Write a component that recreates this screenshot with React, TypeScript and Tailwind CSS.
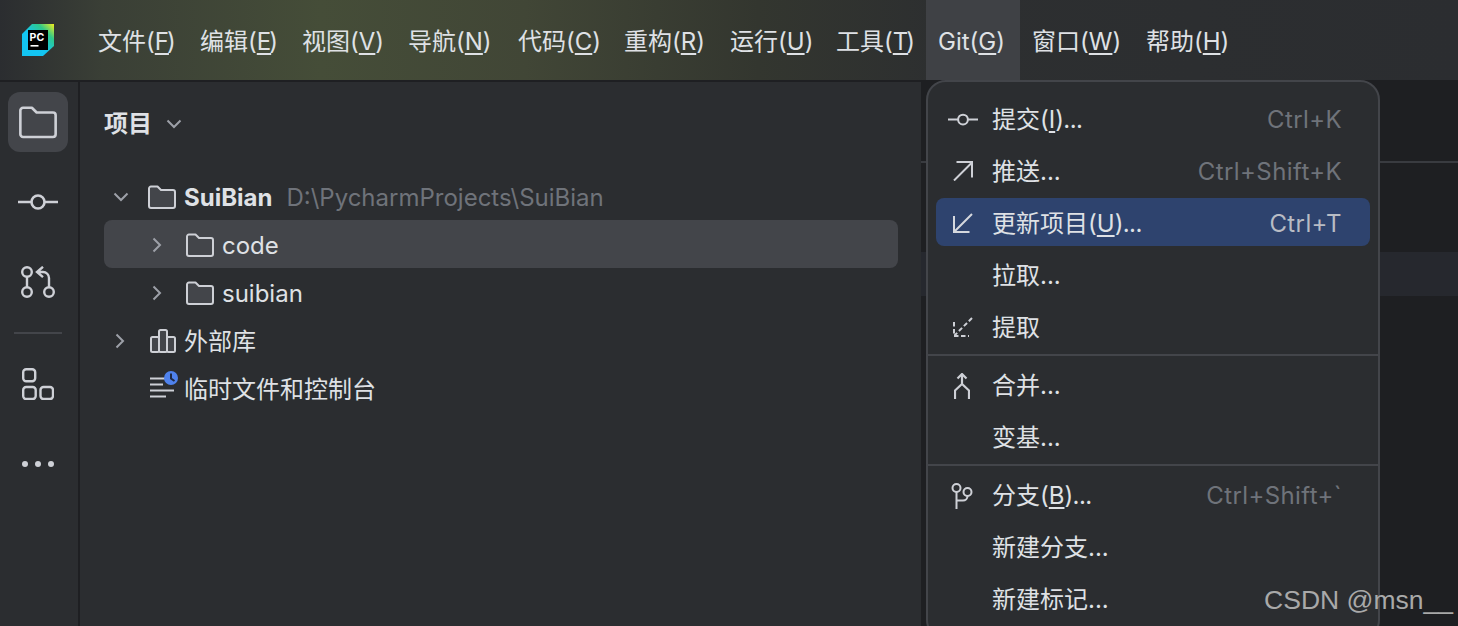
const stroke = "#ced0d6";

const menuBar = [
  { pre: "文件(", k: "F", w: "w-[102px]" },
  { pre: "编辑(", k: "E", w: "w-[102px]" },
  { pre: "视图(", k: "V", w: "w-[106px]" },
  { pre: "导航(", k: "N", w: "w-[110px]" },
  { pre: "代码(", k: "C", w: "w-[106px]" },
  { pre: "重构(", k: "R", w: "w-[106px]" },
  { pre: "运行(", k: "U", w: "w-[106px]" },
  { pre: "工具(", k: "T", w: "w-[102px]" },
  { pre: "Git(", k: "G", w: "w-[94px]" },
  { pre: "窗口(", k: "W", w: "w-[114px]" },
  { pre: "帮助(", k: "H", w: "w-[106px]" },
];

function Logo() {
  return (
    <svg width="34" height="34" viewBox="0 0 34 34" className="shrink-0">
      <defs>
        <linearGradient id="pc" x1="0" y1="1" x2="1" y2="0">
          <stop offset="0.45" stopColor="#13c5f2" />
          <stop offset="0.75" stopColor="#2fc98a" />
          <stop offset="1" stopColor="#f5ee1c" />
        </linearGradient>
      </defs>
      <path d="M11 1H33V23L22 33H1V11Z" fill="url(#pc)" />
      <rect x="7" y="7" width="20" height="20" fill="#000" />
      <rect x="9.5" y="22" width="8" height="1.6" fill="#fff" />
      <text x="8.6" y="17.5" fill="#fff" fontSize="10.5" fontWeight="700" fontFamily="Inter, sans-serif">PC</text>
    </svg>
  );
}

function FolderIcon({ size = 28, fill = "none", sw = 2 }: { size?: number; fill?: string; sw?: number }) {
  return (
    <svg width={size} height={size} viewBox="0 0 28 28" fill={fill} stroke={stroke} strokeWidth={sw * 28 / size}>
      <path d="M1 5.5a2 2 0 0 1 2-2h6.5l3.5 3.5h12a2 2 0 0 1 2 2V23a2 2 0 0 1-2 2H3a2 2 0 0 1-2-2Z" strokeLinejoin="round" />
    </svg>
  );
}

function Chevron({ open = false }: { open?: boolean }) {
  return (
    <svg width="18" height="18" viewBox="0 0 18 18" fill="none" stroke="#9da0a8" strokeWidth="2">
      {open ? <path d="M2.5 5.5 9 12l6.5-6.5" /> : <path d="M5.5 2.5 12 9l-6.5 6.5" />}
    </svg>
  );
}

function CommitIcon({ w = 40, sw = 2.6 }: { w?: number; sw?: number }) {
  return (
    <svg width={w} height={w / 2} viewBox="0 0 40 20" fill="none" stroke={stroke} strokeWidth={sw * 40 / w}>
      <circle cx="20" cy="10" r="6.500" />
      <path d="M0 10h13.500M26.500 10H40" />
    </svg>
  );
}

function PullIcon() {
  return (
    <svg width="34" height="32" viewBox="0 0 34 32" fill="none" stroke={stroke} strokeWidth="2.400">
      <circle cx="6" cy="6" r="4.800" />
      <circle cx="6" cy="26" r="4.800" />
      <circle cx="28" cy="26" r="4.800" />
      <path d="M6 11v10M28 21V12a6 6 0 0 0-6-6h-6M22 0.800 16 6l6 5.200" />
    </svg>
  );
}

function StructureIcon() {
  return (
    <svg width="32" height="32" viewBox="0 0 32 32" fill="none" stroke={stroke} strokeWidth="2.400">
      <rect x="1.200" y="1.200" width="12" height="12" rx="3" />
      <rect x="1.200" y="19" width="12.500" height="12" rx="3" />
      <rect x="18.500" y="19" width="12.500" height="12" rx="3" />
    </svg>
  );
}

function LibraryIcon() {
  return (
    <svg width="26" height="24" viewBox="0 0 26 24" fill="#43454a" stroke={stroke} strokeWidth="2">
      <rect x="1" y="8" width="8" height="15" rx="1.500" />
      <rect x="9" y="1" width="8" height="22" rx="1.500" />
      <rect x="17" y="8" width="8" height="15" rx="1.500" />
    </svg>
  );
}

function ScratchIcon() {
  return (
    <svg width="30" height="30" viewBox="0 0 30 30" fill="none">
      <path d="M0 7.500h15M0 13.500h13M0 19.500h24M0 25.500h16" stroke={stroke} strokeWidth="2" />
      <circle cx="21" cy="7" r="7" fill="#4f82ed" />
      <path d="M21 2.500V7.500l3.500 2.500" stroke="#1f2a44" strokeWidth="2" />
    </svg>
  );
}

function PushIcon() {
  return (
    <svg width="20" height="20" viewBox="0 0 20 20" fill="none" stroke={stroke} strokeWidth="2">
      <path d="M1 19.500 19 1.500M3.500 1h15.500v15.500" />
    </svg>
  );
}

function UpdateIcon() {
  return (
    <svg width="20" height="20" viewBox="0 0 20 20" fill="none" stroke="#d5d8de" strokeWidth="2">
      <path d="M19 1 1.500 18.500M1 3v16h15.500" />
    </svg>
  );
}

function FetchIcon() {
  return (
    <svg width="20" height="20" viewBox="0 0 20 20" fill="none" stroke={stroke} strokeWidth="2">
      <path d="M19 1 1.500 18.500M1 5v14h15" strokeDasharray="4.500 2.500" />
    </svg>
  );
}

function MergeIcon() {
  return (
    <svg width="16" height="26" viewBox="0 0 16 26" fill="none" stroke={stroke} strokeWidth="2.200" className="mr-[2px]">
      <path d="M8 1v10M3.500 5.500 8 1l4.500 4.500M1 26V17.500L8 11l7 6.500V26" />
    </svg>
  );
}

function BranchIcon() {
  return (
    <svg width="22" height="26" viewBox="0 0 22 26" fill="none" stroke={stroke} strokeWidth="2" className="mr-[2px]">
      <circle cx="5.500" cy="5" r="4" />
      <circle cx="16.500" cy="9" r="4" />
      <path d="M5.500 9V26M5.500 17.500H12a4.500 4.500 0 0 0 4.500-4.500" />
    </svg>
  );
}

function Mn({ pre, k }: { pre: string; k: string }) {
  return (
    <span>
      {pre}
      <span className="underline underline-offset-[3px] decoration-2">{k}</span>
      <span className="tracking-[-0.6px]">)...</span>
    </span>
  );
}

function MenuRow({
  icon,
  children,
  shortcut,
  active = false,
  low = false,
}: {
  icon?: React.ReactNode;
  children: React.ReactNode;
  shortcut?: string;
  active?: boolean;
  low?: boolean;
}) {
  return (
    <div className={`h-12 mx-2 mb-1 flex items-center rounded-lg pr-[28px] ${active ? "bg-[#2e436e]" : ""} ${low ? "pt-[2px]" : ""}`}>
      <div className="w-14 shrink-0 flex justify-center pr-[2px]">{icon}</div>
      <div className={`flex-1 whitespace-nowrap ${low ? "pt-[2px]" : ""}`}>{children}</div>
      {shortcut && (
        <div className={`tracking-[0.4px] ${low ? "pt-[2px]" : ""} ${active ? "text-[#b8bcc4]" : "text-[#6f737a]"}`}>{shortcut}</div>
      )}
    </div>
  );
}

function GitMenu() {
  return (
    <div className="absolute left-[926px] top-[80px] w-[454px] h-[560px] rounded-[20px] border-2 border-[#43454a] bg-[#2b2d30] pt-3 text-[24px] leading-none text-[#dfe1e5] overflow-hidden">
      <MenuRow low icon={<CommitIcon w={30} sw={2} />} shortcut="Ctrl+K">
        <Mn pre="提交(" k="I" />
      </MenuRow>
      <MenuRow low icon={<PushIcon />} shortcut="Ctrl+Shift+K">推送...</MenuRow>
      <MenuRow low icon={<UpdateIcon />} shortcut="Ctrl+T" active>
        <Mn pre="更新项目(" k="U" />
      </MenuRow>
      <MenuRow low>拉取...</MenuRow>
      <MenuRow low icon={<FetchIcon />}>提取</MenuRow>
      <div className="h-[2px] bg-[#43454a] mb-[6px]" />
      <MenuRow icon={<MergeIcon />}>合并...</MenuRow>
      <MenuRow>变基...</MenuRow>
      <div className="h-[2px] bg-[#43454a] mb-[6px] -mt-[2px]" />
      <MenuRow icon={<BranchIcon />} shortcut="Ctrl+Shift+`">
        <Mn pre="分支(" k="B" />
      </MenuRow>
      <MenuRow>新建分支...</MenuRow>
      <MenuRow>新建标记...</MenuRow>
    </div>
  );
}

export default function App() {
  return (
    <div
      className="relative w-[1458px] h-[626px] overflow-hidden bg-[#2b2d30] text-[#dfe1e5] text-[24px] leading-none flex flex-col"
      style={{ fontFamily: 'Inter, "Noto Sans CJK SC", sans-serif' }}
    >
      <header className="h-20 shrink-0 flex items-center bg-[linear-gradient(90deg,#2b2d30_0%,#3a3f36_7%,#454d38_22%,#414636_36%,#33362f_52%,#2d2f30_64%,#2b2d30_100%)]">
        <div className="w-[86px] shrink-0 flex justify-center pr-[10px]">
          <Logo />
        </div>
        {menuBar.map(({ pre, k, w }) => (
          <div
            key={k}
            className={`h-full ${w} shrink-0 pl-3 pt-1 flex items-center whitespace-nowrap ${k === "G" ? "bg-[#3f4145]" : ""}`}
          >
            <span>
              {pre}
              <span className={`underline underline-offset-[3px] decoration-2 ${k === "F" || k === "E" || k === "T" ? "-mr-[2px]" : ""}`}>{k}</span>
              )
            </span>
          </div>
        ))}
      </header>

      <div className="flex-1 flex border-t-2 border-[#1e1f22] min-h-0">
        <aside className="w-[80px] shrink-0 border-r-2 border-[#1e1f22] flex flex-col items-center pt-[10px] pr-[2px]">
          <div className="w-[60px] h-[60px] rounded-xl bg-[#43454a] flex items-center justify-center">
            <FolderIcon size={38} sw={2.6} />
          </div>
          <div className="mt-10">
            <CommitIcon />
          </div>
          <div className="mt-[54px] h-8">
            <PullIcon />
          </div>
          <div className="mt-[34px] w-12 h-[2px] bg-[#43454a]" />
          <div className="mt-[34px] h-8">
            <StructureIcon />
          </div>
          <div className="mt-[61px] flex gap-[7px]">
            <span className="w-[6px] h-[6px] rounded-full bg-[#ced0d6]" />
            <span className="w-[6px] h-[6px] rounded-full bg-[#ced0d6]" />
            <span className="w-[6px] h-[6px] rounded-full bg-[#ced0d6]" />
          </div>
        </aside>

        <section className="w-[841px] shrink-0 pl-6 pr-[23px]">
          <div className="h-[84px] flex items-center gap-[13px] pb-[1px]">
            <span className="font-bold">项目</span>
            <Chevron open />
          </div>
          <div className="mt-[6px]">
            <div className="h-12 pt-[2px] flex items-center pl-[8px] gap-[18px]">
              <Chevron open />
              <div className="flex items-center gap-2">
                <FolderIcon fill="#43454a" />
                <span className="font-bold pt-[2px]">SuiBian</span>
                <span className="ml-[6px] pt-[2px] text-[#6f737a]">D:\PycharmProjects\SuiBian</span>
              </div>
            </div>
            <div className="h-12 pt-[2px] flex items-center pl-[44px] gap-5 rounded-lg bg-[#43454a]">
              <Chevron />
              <FolderIcon fill="none" />
              <span className="-ml-3 pt-[2px]">code</span>
            </div>
            <div className="h-12 pt-[2px] flex items-center pl-[44px] gap-5">
              <Chevron />
              <FolderIcon fill="#43454a" />
              <span className="-ml-3 pt-[2px]">suibian</span>
            </div>
            <div className="h-12 pt-[2px] flex items-center pl-[7px] gap-[21px]">
              <Chevron />
              <div className="flex items-center gap-2">
                <LibraryIcon />
                <span className="pt-[2px]">外部库</span>
              </div>
            </div>
            <div className="h-12 pt-[2px] flex items-center pl-[46px] gap-[4px]">
              <div className="-mt-[6px]">
                <ScratchIcon />
              </div>
              <span className="pt-[2px]">临时文件和控制台</span>
            </div>
          </div>
        </section>

        <section className="flex-1 bg-[#1e1f22] flex flex-col">
          <div className="h-[81px] shrink-0 border-b-2 border-[#393b40]" />
          <div className="h-[89px] shrink-0" />
          <div className="h-11 shrink-0 bg-[#26282e]" />
        </section>
      </div>

      <GitMenu />

      <div
        className="absolute right-[5px] bottom-[13px] text-[26.5px] leading-none text-[#a9a9a9]"
        style={{ fontFamily: '"Liberation Sans", sans-serif' }}
      >
        CSDN @msn__
      </div>
    </div>
  );
}
